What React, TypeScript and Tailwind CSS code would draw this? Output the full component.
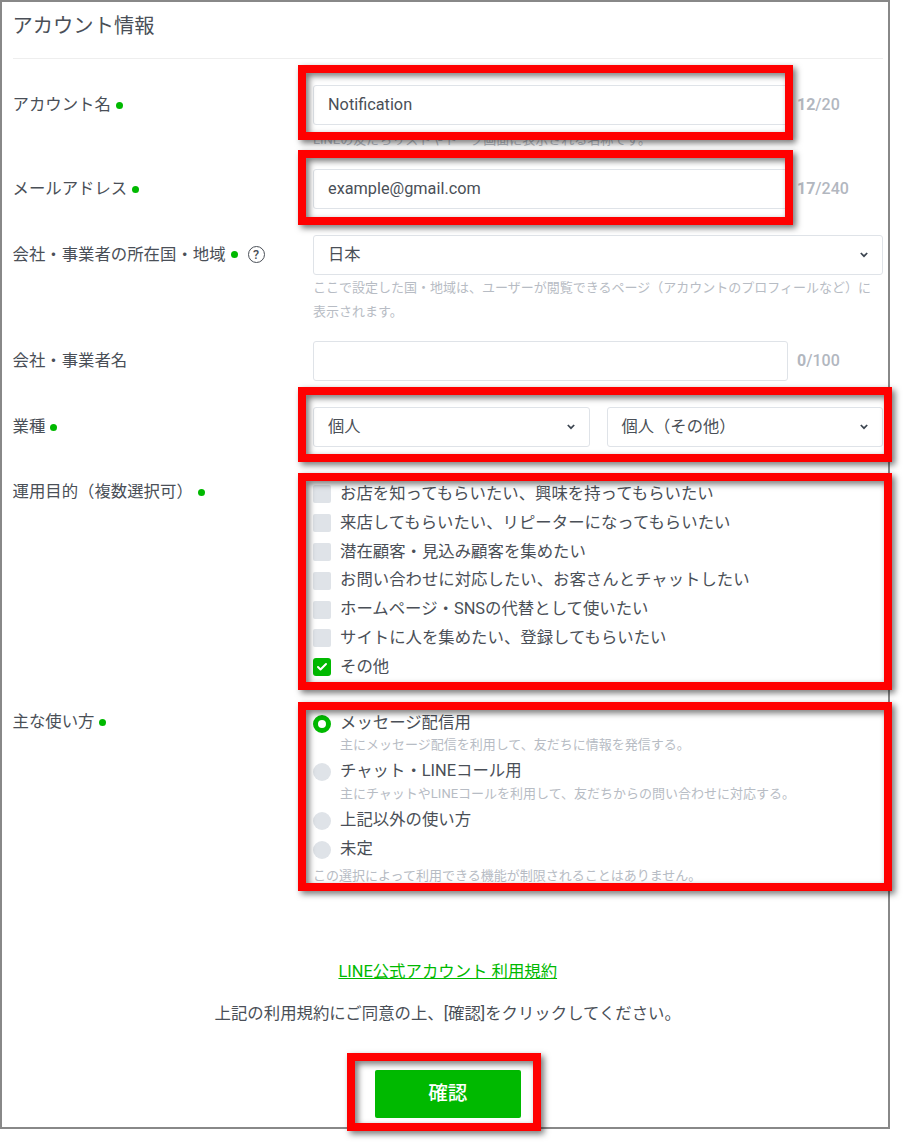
import React from 'react';
import { Check } from 'lucide-react';

const purposes = [
  'お店を知ってもらいたい、興味を持ってもらいたい',
  '来店してもらいたい、リピーターになってもらいたい',
  '潜在顧客・見込み顧客を集めたい',
  'お問い合わせに対応したい、お客さんとチャットしたい',
  'ホームページ・SNSの代替として使いたい',
  'サイトに人を集めたい、登録してもらいたい',
  'その他',
];

function Dot({ className = '' }: { className?: string }) {
  return <span className={`inline-block w-[7px] h-[7px] rounded-full bg-[#00b900] ${className}`} />;
}

function Chevron() {
  return (
    <svg width="8" height="6" viewBox="0 0 8 6" fill="none" className="shrink-0">
      <path d="M0.8 1 4 4.2 7.2 1" stroke="#3c4550" strokeWidth="1.7" />
    </svg>
  );
}

function Box({ children }: { children?: React.ReactNode }) {
  return (
    <div className="h-[40px] flex-1 flex items-center justify-between pl-[14px] pr-[14px] border border-[#dfe3e8] rounded-[3px] bg-white text-[16.3px]">
      {children}
    </div>
  );
}

function Count({ n, max }: { n: number; max: number }) {
  return (
    <div className="w-[95px] pl-[9px] text-[16px] font-medium text-[#b2b7bf]">
      <span className="font-bold">{n}</span>/{max}
    </div>
  );
}

function Row({ label, dot, height, children }: { label: React.ReactNode; dot?: boolean; height: string; children: React.ReactNode }) {
  return (
    <div className={`flex ${height}`}>
      <div className="w-[300.5px] h-[40px] flex items-center gap-[5px] shrink-0">
        <span>{label}</span>
        {dot && <Dot />}
      </div>
      <div className="flex-1 min-w-0">{children}</div>
    </div>
  );
}

function Hint({ children, className = '' }: { children: React.ReactNode; className?: string }) {
  return <p className={`text-[13px] leading-[24px] text-[#b7bcc4] ${className}`}>{children}</p>;
}

function Radio({ on, label }: { on?: boolean; label: string }) {
  return (
    <div className="h-[29px] flex items-center gap-[9px]">
      {on ? (
        <span className="w-[18px] h-[18px] rounded-full border-[5px] border-[#00b900] bg-white" />
      ) : (
        <span className="w-[18px] h-[18px] rounded-full bg-[#dfe3e8]" />
      )}
      <span>{label}</span>
    </div>
  );
}

function RedBox({ className }: { className: string }) {
  return <div className={`absolute border-[8px] border-[#ff0000] drop-shadow-[3px_3px_3px_rgba(0,0,0,0.55)] ${className}`} />;
}

export default function App() {
  return (
    <div className="relative w-[905px] h-[1144px] bg-white overflow-hidden text-[16.4px] text-[#4a4f57] font-['Roboto','Noto_Sans_CJK_JP',sans-serif]">
      <div className="w-[890px] h-[1129px] border-2 border-[#888888] pl-[10.5px] pr-[5px]">
        {/* header */}
        <div className="h-[57px] flex items-center pb-[7px] border-b border-[#eeeeee] text-[20.3px]">アカウント情報</div>

        <div className="pt-[26px]">
          <Row label="アカウント名" dot height="h-[84px]">
            <div className="flex items-center">
              <Box>Notification</Box>
              <Count n={12} max={20} />
            </div>
            <Hint className="mt-[3px]">LINEの友だちリストやトーク画面に表示される名称です。</Hint>
          </Row>

          <Row label="メールアドレス" dot height="h-[66px]">
            <div className="flex items-center">
              <Box>example@gmail.com</Box>
              <Count n={17} max={240} />
            </div>
          </Row>

          <Row
            label={
              <span className="flex items-center gap-[5px]">
                会社・事業者の所在国・地域
                <Dot />
                <span className="ml-[5px] w-[17px] h-[17px] rounded-full border-[1.5px] border-[#4a4f57] flex items-center justify-center text-[12.5px] font-medium leading-none">?</span>
              </span>
            }
            height="h-[106px]"
          >
            <div className="flex">
              <Box>
                日本
                <Chevron />
              </Box>
            </div>
            <Hint className="mt-[1px] max-w-[565px]">ここで設定した国・地域は、ユーザーが閲覧できるページ（アカウントのプロフィールなど）に表示されます。</Hint>
          </Row>

          <Row label="会社・事業者名" height="h-[66px]">
            <div className="flex items-center">
              <Box />
              <Count n={0} max={100} />
            </div>
          </Row>

          <Row label="業種" dot height="h-[73px]">
            <div className="flex gap-[17px]">
              <Box>
                個人
                <Chevron />
              </Box>
              <Box>
                個人（その他）
                <Chevron />
              </Box>
            </div>
          </Row>

          <div className="flex h-[229px]">
            <div className="w-[300.5px] flex items-center gap-[5px] shrink-0 h-[24px]">
              運用目的（複数選択可）
              <Dot />
            </div>
            <div>
              {purposes.map((p, i) => (
                <div key={p} className="h-[28.8px] flex items-center gap-[9px]">
                  {i === 6 ? (
                    <span className="w-[18px] h-[18px] rounded-[3px] bg-[#00b900] flex items-center justify-center">
                      <Check size={12} strokeWidth={4} color="#ffffff" />
                    </span>
                  ) : (
                    <span className="w-[18px] h-[18px] rounded-[2px] bg-[#dfe3e8]" />
                  )}
                  <span>{p}</span>
                </div>
              ))}
            </div>
          </div>

          <div className="flex">
            <div className="w-[300.5px] flex items-center gap-[5px] shrink-0 h-[26px]">
              主な使い方
              <Dot />
            </div>
            <div>
              <Radio on label="メッセージ配信用" />
              <Hint className="pl-[27px] -mt-[5px]">主にメッセージ配信を利用して、友だちに情報を発信する。</Hint>
              <Radio label="チャット・LINEコール用" />
              <Hint className="pl-[27px] -mt-[4px]">主にチャットやLINEコールを利用して、友だちからの問い合わせに対応する。</Hint>
              <Radio label="上記以外の使い方" />
              <Radio label="未定" />
              <Hint className="leading-[22px]">この選択によって利用できる機能が制限されることはありません。</Hint>
            </div>
          </div>
        </div>

        {/* terms */}
        <div className="mt-[71px] flex flex-col items-center">
          <a className="text-[#00b900] underline leading-[26px]">LINE公式アカウント 利用規約</a>
          <p className="mt-[16px] leading-[26px]">上記の利用規約にご同意の上、[確認]をクリックしてください。</p>
          <button className="mt-[43px] w-[146px] h-[48px] rounded-[2px] bg-[#00b900] text-white text-[19.5px] font-medium">確認</button>
        </div>
      </div>

      {/* 赤枠の注釈 */}
      <RedBox className="left-[298px] top-[65px] w-[495px] h-[75px]" />
      <RedBox className="left-[298px] top-[150px] w-[495px] h-[75px]" />
      <RedBox className="left-[298px] top-[387px] w-[594px] h-[75px]" />
      <RedBox className="left-[298px] top-[473px] w-[594px] h-[217px]" />
      <RedBox className="left-[298px] top-[702px] w-[594px] h-[189px]" />
      <RedBox className="left-[347px] top-[1053px] w-[194px] h-[78px]" />
    </div>
  );
}
